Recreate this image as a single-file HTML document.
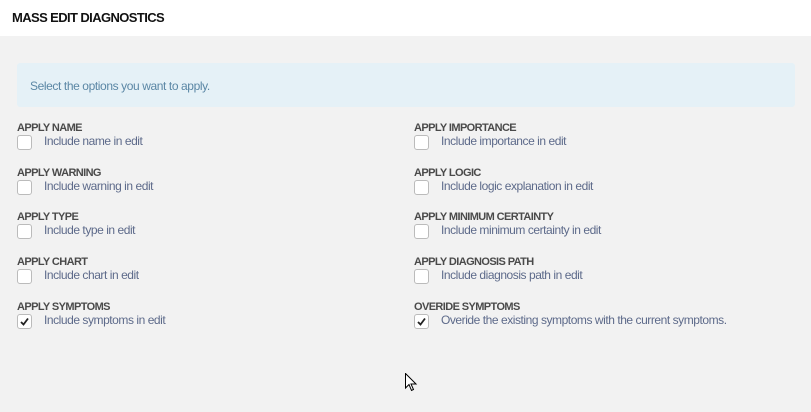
<!DOCTYPE html>
<html><head><style>
body{margin:0;width:811px;height:412px;background:#f2f2f2;font-family:"Liberation Sans",Arial,sans-serif;position:relative;overflow:hidden}
.hdr{position:absolute;left:0;top:0;width:811px;height:36px;background:#fff}
.hdr span{position:absolute;left:12px;top:10px;font-size:13px;font-weight:bold;color:#111;letter-spacing:-0.6px}
.alert{position:absolute;left:17px;top:63px;width:778px;height:44px;background:#e5f1f7;border-radius:3px}
.alert span{position:absolute;left:13px;top:16px;font-size:12px;color:#5b87a5;letter-spacing:-0.4px}
.item{position:absolute}
.lbl{position:absolute;left:0;top:2px;font-size:11px;font-weight:bold;color:#4a4a4a;white-space:nowrap;letter-spacing:-0.6px}
.cb{position:absolute;left:0;top:15px;width:13px;height:13px;border:1px solid #bbb;border-radius:3px;background:#fff}
.cb svg{position:absolute;left:2px;top:2px}
.txt{position:absolute;left:27px;top:14px;font-size:12px;color:#5d6a8a;white-space:nowrap;letter-spacing:-0.45px}
</style></head><body>
<div class="hdr"><span>MASS EDIT DIAGNOSTICS</span></div>
<div class="alert"><span>Select the options you want to apply.</span></div>

<div class="item" style="left:17px;top:120px"><div class="lbl">APPLY NAME</div><div class="cb"></div><div class="txt">Include name in edit</div></div>
<div class="item" style="left:17px;top:165px"><div class="lbl">APPLY WARNING</div><div class="cb"></div><div class="txt">Include warning in edit</div></div>
<div class="item" style="left:17px;top:209px"><div class="lbl">APPLY TYPE</div><div class="cb"></div><div class="txt">Include type in edit</div></div>
<div class="item" style="left:17px;top:254px"><div class="lbl">APPLY CHART</div><div class="cb"></div><div class="txt">Include chart in edit</div></div>
<div class="item" style="left:17px;top:299px"><div class="lbl">APPLY SYMPTOMS</div><div class="cb"><svg width="9" height="9" viewBox="0 0 9 9"><path d="M1 5 L3.5 7.5 L8 1.5" stroke="#222" stroke-width="1.8" fill="none"/></svg></div><div class="txt">Include symptoms in edit</div></div>

<div class="item" style="left:414px;top:120px"><div class="lbl">APPLY IMPORTANCE</div><div class="cb"></div><div class="txt">Include importance in edit</div></div>
<div class="item" style="left:414px;top:165px"><div class="lbl">APPLY LOGIC</div><div class="cb"></div><div class="txt">Include logic explanation in edit</div></div>
<div class="item" style="left:414px;top:209px"><div class="lbl">APPLY MINIMUM CERTAINTY</div><div class="cb"></div><div class="txt">Include minimum certainty in edit</div></div>
<div class="item" style="left:414px;top:254px"><div class="lbl">APPLY DIAGNOSIS PATH</div><div class="cb"></div><div class="txt">Include diagnosis path in edit</div></div>
<div class="item" style="left:414px;top:299px"><div class="lbl">OVERIDE SYMPTOMS</div><div class="cb"><svg width="9" height="9" viewBox="0 0 9 9"><path d="M1 5 L3.5 7.5 L8 1.5" stroke="#222" stroke-width="1.8" fill="none"/></svg></div><div class="txt">Overide the existing symptoms with the current symptoms.</div></div>

<svg style="position:absolute;left:405px;top:373px" width="13" height="20" viewBox="0 0 13 20"><path d="M0.5 0.5 L0.5 15 L4 11.5 L6.5 17.5 L8.5 16.5 L6 11 L11 11 Z" fill="#fff" stroke="#000" stroke-width="1"/></svg>
</body></html>
